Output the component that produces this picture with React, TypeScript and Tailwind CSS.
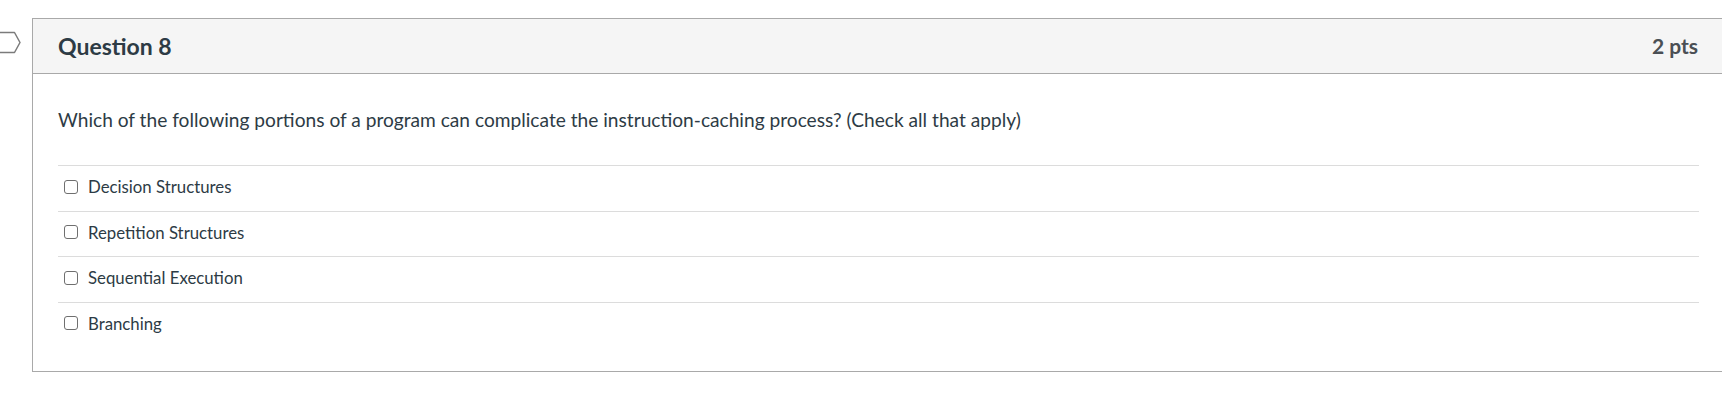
import { useState } from "react";

const options = [
  "Decision Structures",
  "Repetition Structures",
  "Sequential Execution",
  "Branching",
];

function Flag() {
  return (
    <svg width="22" height="24" viewBox="0 0 22 24" className="shrink-0 mt-[13px]">
      <path
        d="M-2 1.5 H14.5 L20 11.5 L14.5 21.5 H-2"
        fill="white"
        stroke="#7b7b7b"
        strokeWidth="1.5"
        strokeLinejoin="round"
      />
    </svg>
  );
}

export default function App() {
  const [checked, setChecked] = useState<boolean[]>([false, false, false, false]);

  const toggle = (i: number) => {
    setChecked((prev) => prev.map((v, j) => (j === i ? !v : v)));
  };

  return (
    <div className="w-[1722px] h-[403px] overflow-hidden bg-white font-['Lato','Liberation_Sans',sans-serif] text-[#2d3b45]">
      <div className="flex pt-[18px]">
        <Flag />
        <div className="ml-[10px] w-[1700px] shrink-0 border border-[#a9a9a9]">
          {/* header */}
          <div className="h-[55px] flex items-center justify-between bg-[#f5f5f5] border-b border-[#a9a9a9] pl-[25px] pr-[33px]">
            <h2 className="text-[23px] font-bold">Question 8</h2>
            <span className="text-[21px] font-bold text-[#4a4f54]">2 pts</span>
          </div>

          {/* body */}
          <div className="pl-[25px] pr-[32px] pt-[33px] pb-[24px]">
            <p className="text-[19.15px] leading-[26px] text-[#2d3b45]">
              Which of the following portions of a program can complicate the instruction-caching process? (Check all that apply)
            </p>

            <div className="mt-[32px]">
              {options.map((opt, i) => (
                <label
                  key={opt}
                  className="h-[45.5px] flex items-center gap-[10px] pl-[6px] pb-[3px] border-t border-[#dcdcdc] cursor-pointer"
                >
                  <span
                    onClick={() => toggle(i)}
                    className={
                      "w-[14px] h-[14px] rounded-[3px] border-[1.5px] border-[#6f6f6f] " +
                      (checked[i] ? "bg-[#0374b5]" : "bg-white")
                    }
                  />
                  <span className="text-[16.8px] text-[#2d3b45]">{opt}</span>
                </label>
              ))}
            </div>
          </div>
        </div>
      </div>
    </div>
  );
}
